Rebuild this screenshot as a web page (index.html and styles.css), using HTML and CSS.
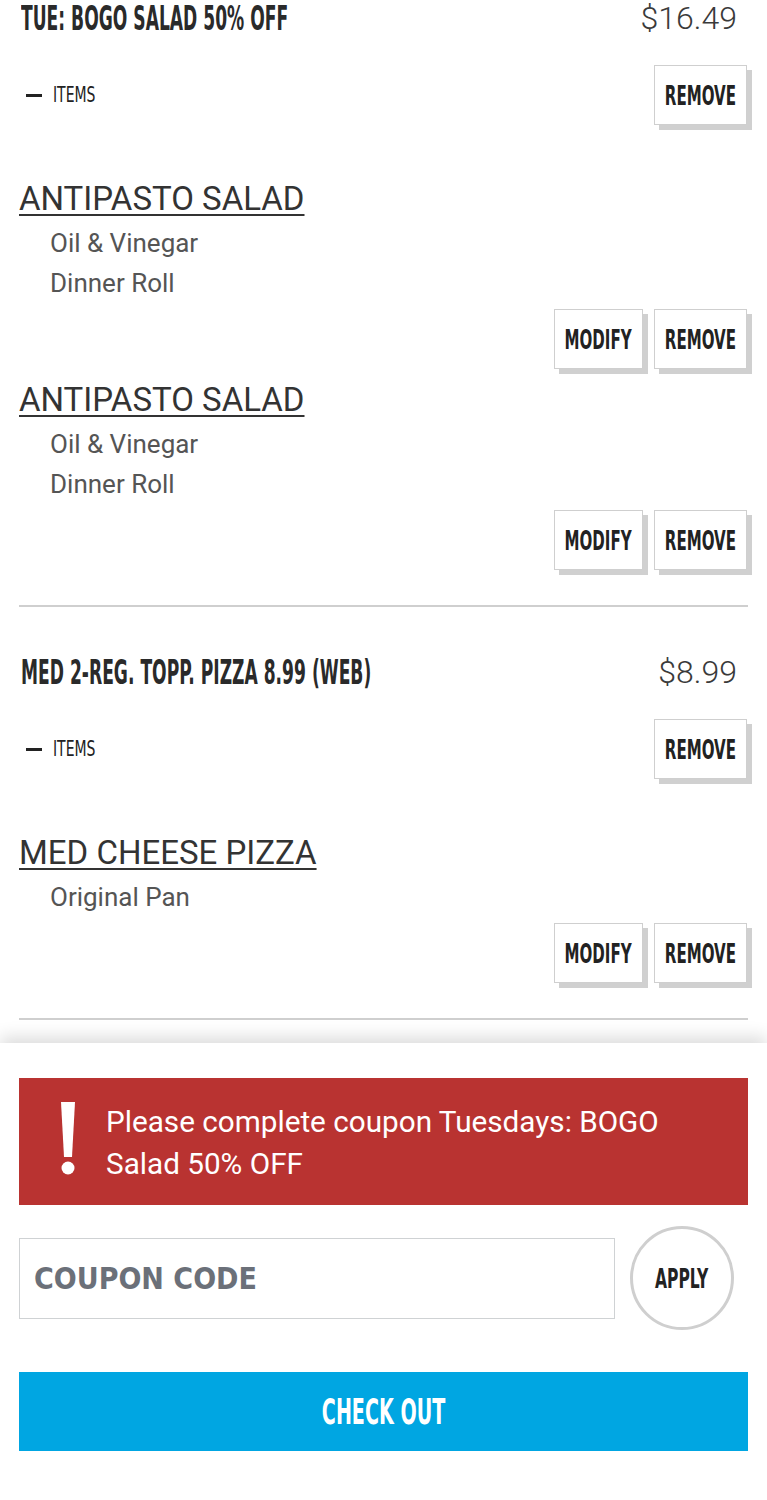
FILE: index.html
```html
<!DOCTYPE html>
<html lang="en">
<head>
    <meta charset="UTF-8">
    <meta name="viewport" content="width=device-width, initial-scale=1.0">
    <title>Cart</title>
    <link rel="stylesheet" href="styles.css">
</head>
<body>
    <main class="cart">

        <section class="deal">
            <div class="deal-head">
                <h2 class="deal-title"><span>TUE: BOGO SALAD 50% OFF</span></h2>
                <span class="deal-price">$16.49</span>
            </div>
            <div class="deal-bar">
                <span class="toggle"><span class="dash"></span><span class="label">ITEMS</span></span>
                <button class="btn btn-remove"><span>REMOVE</span></button>
            </div>
            <div class="items">
                <div class="item">
                    <a class="item-name" href="#">ANTIPASTO SALAD</a>
                    <ul class="options">
                        <li>Oil &amp; Vinegar</li>
                        <li>Dinner Roll</li>
                    </ul>
                    <div class="actions">
                        <button class="btn btn-modify"><span>MODIFY</span></button>
                        <button class="btn btn-remove"><span>REMOVE</span></button>
                    </div>
                </div>
                <div class="item">
                    <a class="item-name" href="#">ANTIPASTO SALAD</a>
                    <ul class="options">
                        <li>Oil &amp; Vinegar</li>
                        <li>Dinner Roll</li>
                    </ul>
                    <div class="actions">
                        <button class="btn btn-modify"><span>MODIFY</span></button>
                        <button class="btn btn-remove"><span>REMOVE</span></button>
                    </div>
                </div>
            </div>
        </section>

        <section class="deal">
            <div class="deal-head">
                <h2 class="deal-title"><span>MED 2-REG. TOPP. PIZZA 8.99 (WEB)</span></h2>
                <span class="deal-price">$8.99</span>
            </div>
            <div class="deal-bar">
                <span class="toggle"><span class="dash"></span><span class="label">ITEMS</span></span>
                <button class="btn btn-remove"><span>REMOVE</span></button>
            </div>
            <div class="items">
                <div class="item">
                    <a class="item-name" href="#">MED CHEESE PIZZA</a>
                    <ul class="options">
                        <li>Original Pan</li>
                    </ul>
                    <div class="actions">
                        <button class="btn btn-modify"><span>MODIFY</span></button>
                        <button class="btn btn-remove"><span>REMOVE</span></button>
                    </div>
                </div>
            </div>
        </section>

    </main>

    <footer class="checkout-panel">
        <div class="alert">
            <svg class="alert-icon" width="18" height="76" viewBox="0 0 18 76">
                <polygon points="2,0 16,0 13,55 5,55" fill="#fff"/>
                <circle cx="9" cy="66" r="6.5" fill="#fff"/>
            </svg>
            <p>Please complete coupon Tuesdays: BOGO Salad 50% OFF</p>
        </div>

        <div class="coupon">
            <input class="coupon-input" type="text" placeholder="COUPON CODE">
            <button class="apply"><span>APPLY</span></button>
        </div>

        <button class="checkout"><span>CHECK OUT</span></button>
    </footer>
</body>
</html>
```

FILE: styles.css
```css
* {
    box-sizing: border-box;
    margin: 0;
    padding: 0;
}

body {
    font-family: Roboto, 'Liberation Sans', sans-serif;
    color: #333;
    background-color: #fff;
}

button {
    font: inherit;
    background: none;
    border: none;
    cursor: pointer;
}

/* condensed display type: the narrowest installed face, squeezed */
.deal-title span,
.toggle .label,
.btn span,
.apply span,
.checkout span {
    display: inline-block;
    font-family: 'DejaVu Sans Condensed', sans-serif;
    white-space: nowrap;
}

.cart {
    padding: 0 19px 23px;
}

.deal {
    padding-bottom: 35px;
    border-bottom: 2px solid #cfcfcf;
}

.deal + .deal {
    padding-top: 47px;
}

.deal-head {
    display: flex;
    justify-content: space-between;
    align-items: center;
    height: 36px;
}

.deal-title {
    font-size: 34px;
    line-height: 36px;
    padding-left: 2px;
}

.deal-title span {
    font-weight: 700;
    color: #2a2a2a;
    transform: scaleX(0.56);
    transform-origin: left center;
}

.deal-price {
    font-weight: 300;
    font-size: 32px;
    color: #3a3a3a;
    padding-right: 11px;
}

.deal-bar {
    display: flex;
    justify-content: space-between;
    align-items: center;
    margin-top: 29px;
    padding-right: 1px;
}

.toggle {
    display: flex;
    align-items: center;
    padding-left: 7px;
    font-size: 21px;
    color: #222;
}

.toggle .label {
    transform: scaleX(0.74);
    transform-origin: left center;
}

.dash {
    width: 16px;
    height: 3px;
    background-color: #222;
    margin-right: 11px;
}

.btn {
    display: flex;
    align-items: center;
    justify-content: center;
    height: 60px;
    border: 1px solid #cfcfcf;
    box-shadow: 5px 5px 0 #d0d0d0;
    background-color: #fff;
    font-size: 27px;
    color: #222;
}

.btn span {
    font-weight: 700;
    transform: scaleX(0.62);
}

.btn-modify {
    width: 89px;
}

.btn-remove {
    width: 93px;
}

.items {
    padding-top: 56px;
    display: flex;
    flex-direction: column;
    gap: 13px;
}

.item-name {
    display: block;
    width: fit-content;
    font-size: 33px;
    line-height: 36px;
    color: #333;
    text-decoration: underline;
    text-decoration-thickness: 2px;
    text-underline-offset: 4px;
}

.options {
    list-style: none;
    margin-top: 6px;
    padding-left: 31px;
}

.options li {
    font-size: 26px;
    line-height: 40px;
    color: #555;
}

.actions {
    display: flex;
    justify-content: flex-end;
    gap: 11px;
    margin-top: 6px;
    padding-right: 1px;
}

/* bottom panel */
.checkout-panel {
    padding: 35px 19px 49px;
    background-color: #fff;
    box-shadow: 0 -6px 16px rgba(0, 0, 0, 0.14);
}

.alert {
    display: flex;
    align-items: flex-start;
    height: 127px;
    padding: 23px 60px 20px 40px;
    background-color: #b93331;
    color: #fff;
}

.alert-icon {
    flex-shrink: 0;
    margin-top: 1px;
    margin-right: 29px;
}

.alert p {
    font-size: 29.7px;
    line-height: 42px;
}

.coupon {
    display: flex;
    align-items: center;
    margin-top: 21px;
}

.coupon-input {
    width: 596px;
    height: 81px;
    padding: 0 14px;
    border: 1px solid #cfd2d4;
    font-family: 'DejaVu Sans Condensed', sans-serif;
    font-weight: 700;
    font-size: 30px;
    color: #333;
    outline: none;
}

.coupon-input::placeholder {
    color: #6b7079;
}

.apply {
    display: flex;
    align-items: center;
    justify-content: center;
    width: 104px;
    height: 104px;
    margin-left: 15px;
    border: 3px solid #cfcfcf;
    border-radius: 50%;
    font-size: 27px;
    color: #222;
}

.apply span {
    font-weight: 700;
    transform: scaleX(0.64);
}

.checkout {
    display: flex;
    align-items: center;
    justify-content: center;
    width: 100%;
    height: 79px;
    margin-top: 42px;
    background-color: #00a6e2;
    font-size: 36px;
    color: #fff;
}

.checkout span {
    font-weight: 700;
    transform: scaleX(0.59);
}
```
